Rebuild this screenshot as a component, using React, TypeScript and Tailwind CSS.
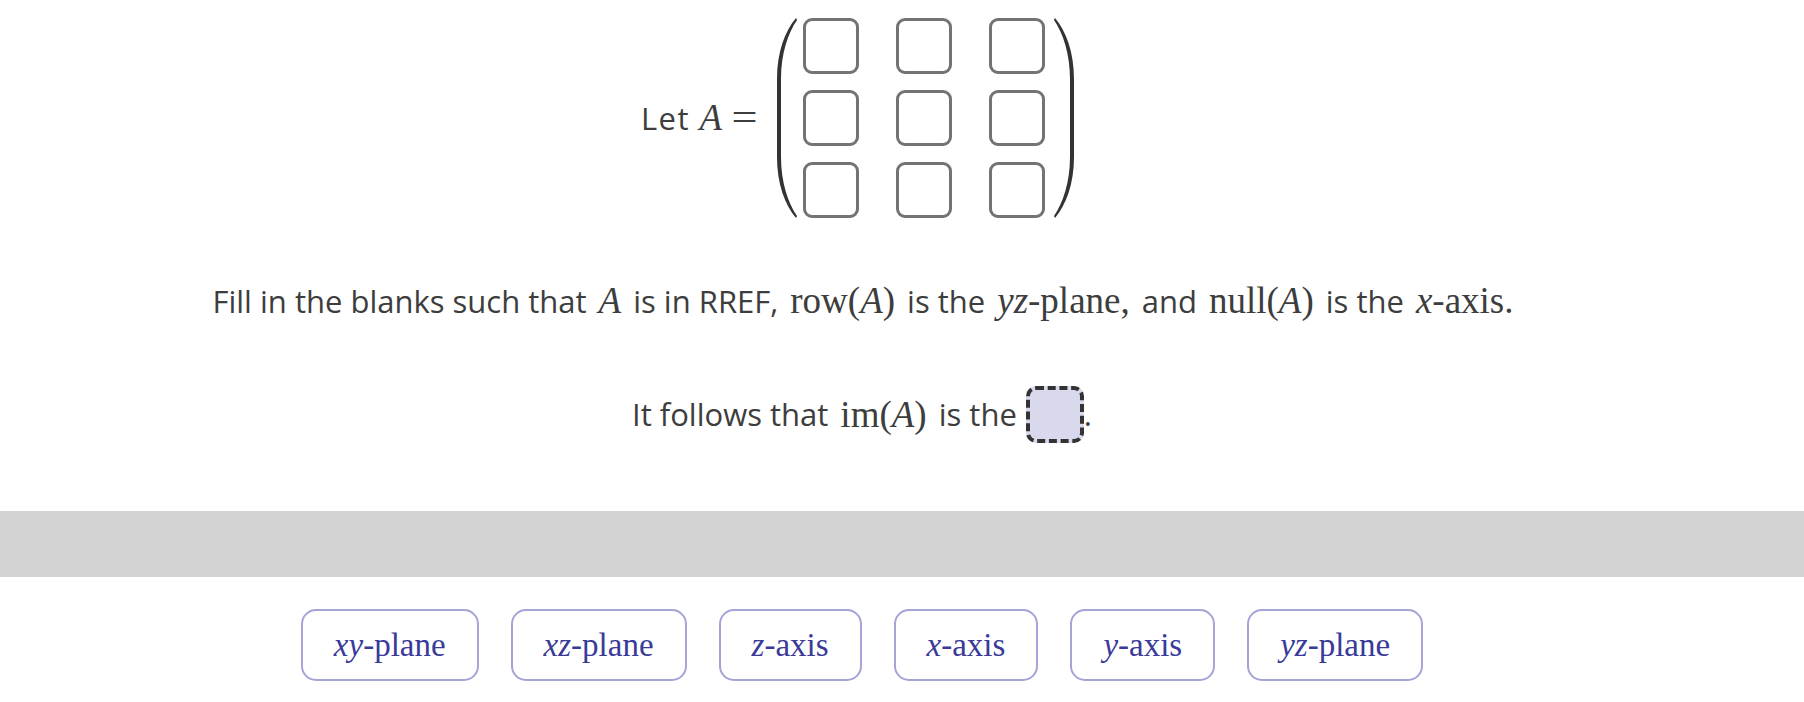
import React from "react";

const M = ({ children, i = false }: { children: React.ReactNode; i?: boolean }) => (
  <span className={`font-['Liberation_Serif',serif] text-[37px] ${i ? "italic" : ""}`}>{children}</span>
);

const IM = ({ children }: { children: React.ReactNode }) => (
  <span className="mx-[12px] font-['Liberation_Serif',serif] text-[37px]">{children}</span>
);

const Paren = ({ right = false }: { right?: boolean }) => (
  <svg width="22" height="202" viewBox="0 0 22 202" className={right ? "-scale-x-100" : ""}>
    <path
      d="M21,1 C10,14 2,35 2,62 L2,140 C2,167 10,188 21,201 L22,199 C13,186 6,165 6,140 L6,62 C6,37 13,16 22,3 Z"
      fill="#333333"
    />
  </svg>
);

const Cell = () => (
  <div className="w-[56px] h-[56px] rounded-[9px] border-[3px] border-[#737373] bg-white" />
);

const Btn = ({ v, rest }: { v: string; rest: string }) => (
  <div className="h-[72px] px-[31px] flex items-center justify-center rounded-[15px] border-2 border-[#a4a4d6] bg-white text-[#3a3a99] font-['Liberation_Serif',serif] text-[33px] leading-none">
    <span className="italic">{v}</span>
    <span>{rest}</span>
  </div>
);

export default function App() {
  return (
    <div className="w-[1804px] h-[702px] bg-white text-[#3d3d3d] font-['Open_Sans',sans-serif] overflow-hidden">
      <div className="w-[1724px] flex flex-col items-center">
        <div className="mt-[17px] mr-[7px] flex items-center h-[202px]">
          <span className="text-[31px] tracking-[1.5px]">Let&nbsp;</span>
          <M i>A</M>
          <span className="ml-[12px] mr-[20px]"><M><span className="inline-block scale-x-125">=</span></M></span>
          <Paren />
          <div className="ml-[6px] mr-[9px] grid grid-cols-3 gap-x-[37px] gap-y-[16px]">
            {Array.from({ length: 9 }).map((_, k) => (
              <Cell key={k} />
            ))}
          </div>
          <Paren right />
        </div>
        <div className="mt-[62px] ml-[14px] h-[40px] flex items-center text-[31px] whitespace-pre">
          <span>Fill in the blanks such that</span>
          <IM><span className="italic">A</span></IM>
          <span>is in RREF,</span>
          <IM>row(<span className="italic">A</span>)</IM>
          <span>is the</span>
          <IM><span className="italic">yz</span>-plane,</IM>
          <span>and</span>
          <IM>null(<span className="italic">A</span>)</IM>
          <span>is the</span>
          <IM><span className="italic">x</span>-axis.</IM>
        </div>
        <div className="mt-[65px] h-[57px] flex items-center text-[31px] whitespace-pre">
          <span>It follows that</span>
          <IM>im(<span className="italic">A</span>)</IM>
          <span>is the</span>
          <div className="ml-[9px] w-[58px] h-[57px] rounded-[10px] border-[4px] border-dashed border-[#333333] bg-[#d9d9ed]" />
          <span>.</span>
        </div>
      </div>
      <div className="mt-[68px] h-[66px] bg-[#d3d3d3]" />
      <div className="w-[1724px] mt-[32px] flex justify-center gap-[32px]">
        <Btn v="xy" rest="-plane" />
        <Btn v="xz" rest="-plane" />
        <Btn v="z" rest="-axis" />
        <Btn v="x" rest="-axis" />
        <Btn v="y" rest="-axis" />
        <Btn v="yz" rest="-plane" />
      </div>
    </div>
  );
}
